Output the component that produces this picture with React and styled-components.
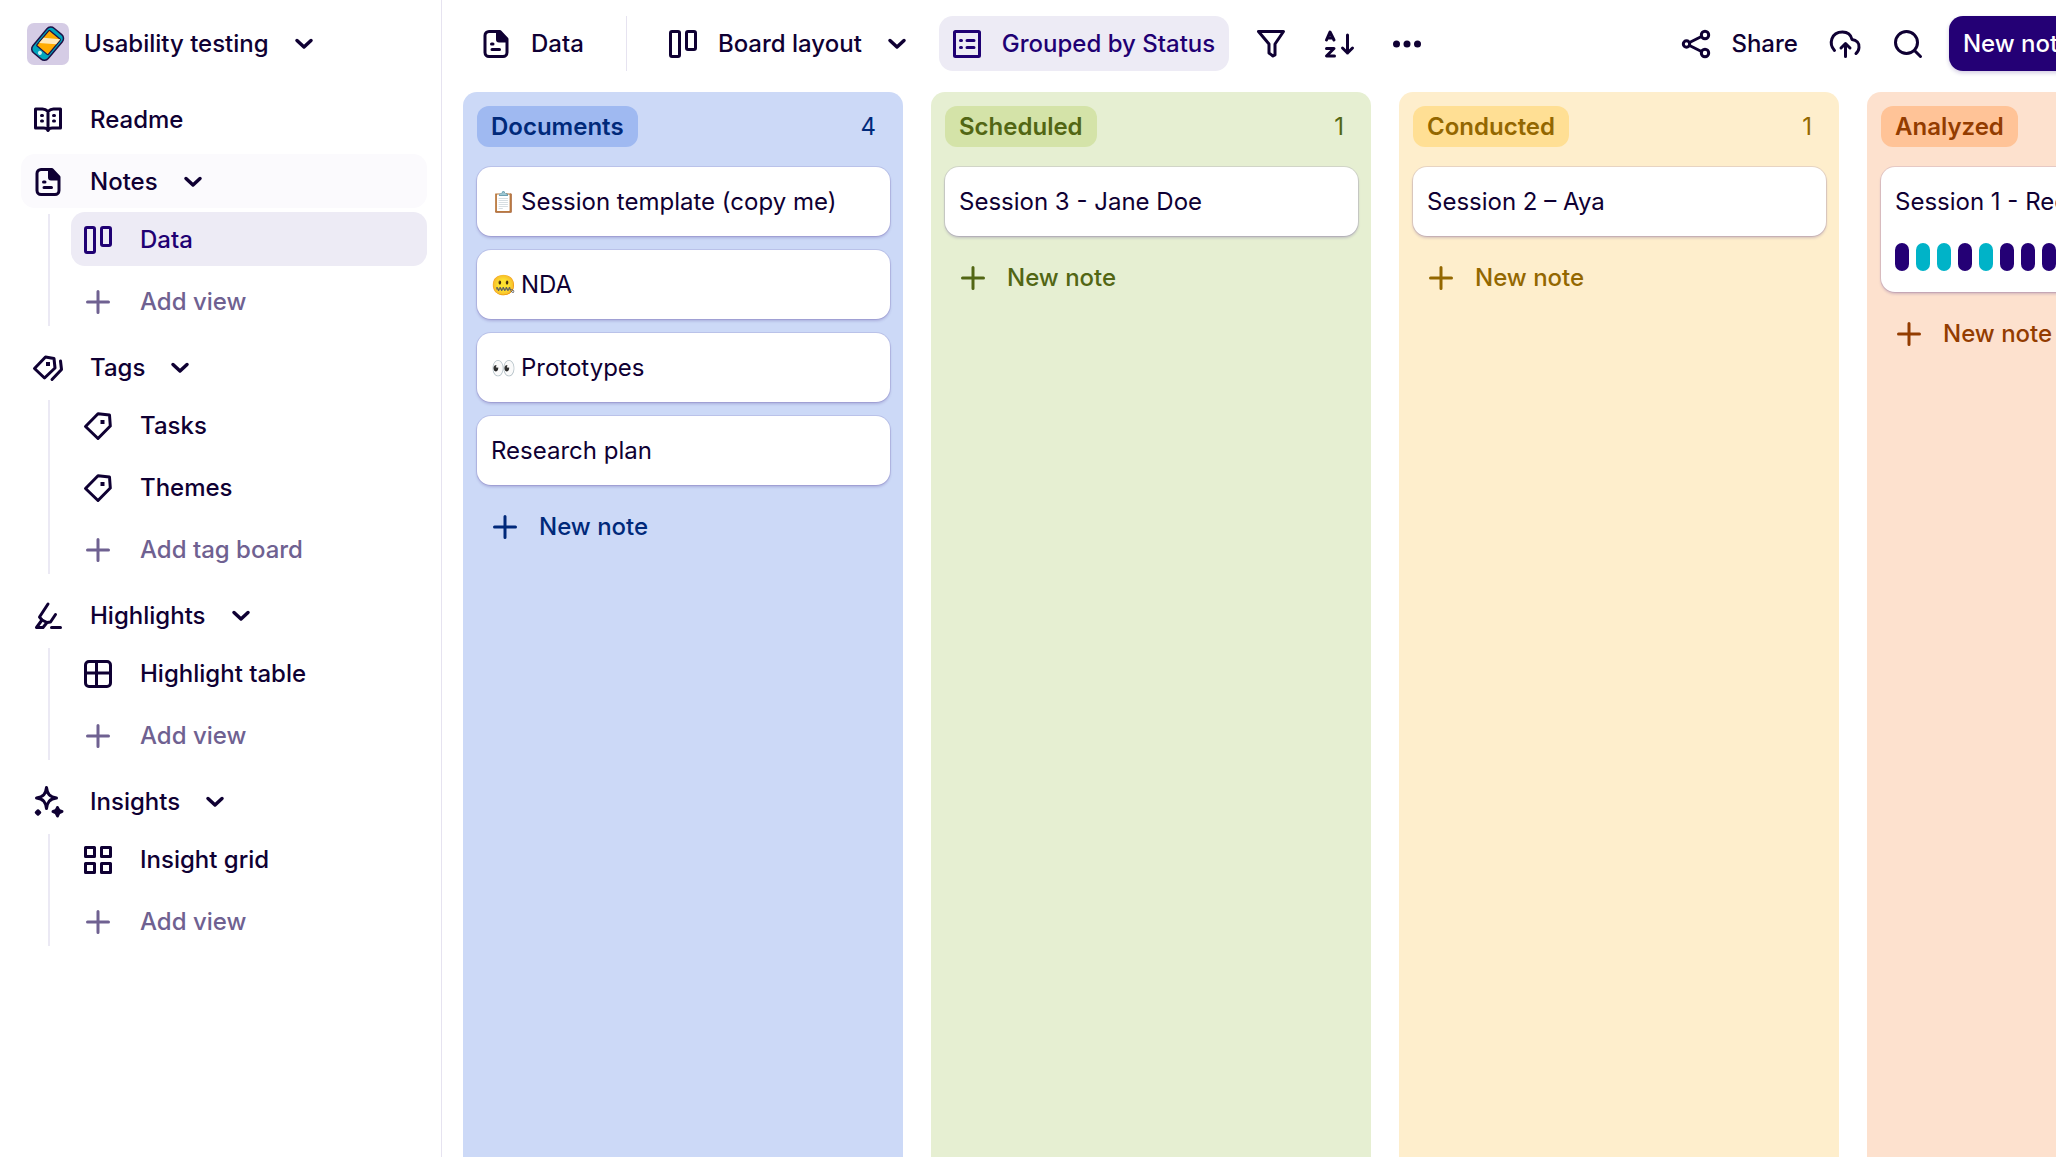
import { useState } from 'react'
import styled, { createGlobalStyle } from 'styled-components'

// Every icon is drawn on a 28 x 28 grid
const icons = {
  book: (
    <g>
      <path d="M14 5.5C12.5 4 11 3 8.5 3H1.5V22H9.500C12 22 13.300 22.500 14 24.500C14.700 22.500 16 22 18.500 22H26.500V3H19.500C17 3 15.500 4 14 5.500V24.500" />
      <path d="M7.500 9.500H8.500M7.500 15H8.500M19.500 9.500H20.500M19.500 15H20.500" />
    </g>
  ),
  note: (
    <g>
      <path d="M17 1.500H7A4 4 0 0 0 3 5.500V22.500A4 4 0 0 0 7 26.500H21A4 4 0 0 0 25 22.500V9L18 1.500Z" />
      <path d="M14 1H18.500L26 8.500V12.500H17A3 3 0 0 1 14 9.500Z" fill="currentColor" stroke="none" />
      <path d="M9.500 14H11M10 19.500H17.500" />
    </g>
  ),
  board: (
    <g>
      <rect x="1.500" y="1.500" width="9" height="25" rx="1.500" />
      <rect x="17.500" y="1.500" width="9" height="18" rx="1.500" />
    </g>
  ),
  plus: <path d="M14 3.500V24.500M3.500 14H24.500" />,
  tags: (
    <g>
      <path d="M0.500 14.500L11.500 3L20 4.500L21 14L10.500 24Z" />
      <path d="M26.500 7L27.500 15.500L18 25.500" />
      <rect x="12" y="8" width="4" height="4" fill="currentColor" stroke="none" />
    </g>
  ),
  tag: (
    <g>
      <path d="M1.500 14.500L14 1.800L25.500 3L26.300 14L14 26.500Z" />
      <rect x="16.500" y="8" width="4" height="4" fill="currentColor" stroke="none" />
    </g>
  ),
  highlighter: (
    <g>
      <path d="M14 2L5.500 15L8 18L13 20.500L16.500 20L21.500 12.500" />
      <path d="M8 18L2.500 25.500H9L13 20.500" />
      <path d="M17.500 25.500H26.500" />
    </g>
  ),
  table: (
    <g>
      <rect x="1.500" y="1.500" width="25" height="25" rx="3.500" />
      <path d="M12.500 1.500V26.500M1.500 13H26.500" />
    </g>
  ),
  sparkle: (
    <g>
      <path d="M12.500 -0.500C13.300 6 15.500 9 22.500 10C15.500 11 13.300 14 12.500 20.500C11.700 14 9.500 11 2.500 10C9.500 9 11.700 6 12.500 -0.500Z" />
      <path d="M23.500 19.500C24 22 25 23 28 23.500C25 24 24 25 23.500 28C23 25 22 24 19 23.500C22 23 23 22 23.500 19.500Z" fill="currentColor" />
      <path d="M4 22.500L6 24.500L4 26.500L2 24.500Z" fill="currentColor" strokeWidth="2.500" />
    </g>
  ),
  grid: (
    <g>
      <rect x="1.500" y="1.500" width="9" height="9" />
      <rect x="17.500" y="1.500" width="9" height="9" />
      <rect x="1.500" y="17.500" width="9" height="9" />
      <rect x="17.500" y="17.500" width="9" height="9" />
    </g>
  ),
  group: (
    <g>
      <rect x="1.500" y="1.500" width="25" height="25" rx="1" />
      <path d="M7.500 10.500H8.500M14 10.500H21M7.500 17.500H8.500M14 17.500H21" />
    </g>
  ),
  filter: <path d="M1.500 1.500H26.500L18 14V25L16 26L12 23V14Z" />,
  sort: (
    <g>
      <path d="M1.500 10L5 2L9 10M3 8H7.500" />
      <path d="M1.500 18.500H9L1.500 26H9.500" />
      <path d="M22.500 5V23M17.500 18L22.500 23L27.500 18" />
    </g>
  ),
  dots: (
    <g fill="currentColor" stroke="none">
      <circle cx="3.500" cy="14" r="3.500" />
      <circle cx="14" cy="14" r="3.500" />
      <circle cx="24.500" cy="14" r="3.500" />
    </g>
  ),
  share: (
    <g>
      <circle cx="4.500" cy="14" r="3.200" />
      <circle cx="23" cy="5" r="3.700" />
      <circle cx="23" cy="23" r="3.700" />
      <path d="M7.500 12.500L19.500 6.500M7.500 15.500L19.500 21.500" />
    </g>
  ),
  upload: (
    <g>
      <path d="M3.500 20.500C-2.500 14 0 2 11.500 2C16.500 2 20 5 21 9.500C25.500 10 28.500 13 28 17.500C27.800 20 27 22 25 23.500" />
      <path d="M14.500 26.500V13.500M10 18L14.500 13.500L19 18" />
    </g>
  ),
  search: (
    <g>
      <circle cx="12.500" cy="12.500" r="11" />
      <path d="M20.500 20.500L26.500 26.500" />
    </g>
  ),
  chevron: <path d="M7 10.500L14 17L21 10.500" strokeWidth="3.500" />,
}

function Icon({ name }) {
  return (
    <IconSvg viewBox="0 0 28 28" aria-hidden="true">{ icons[name] }</IconSvg>
  )
}

const sections = [
  {
    title: 'Notes',
    icon: 'note',
    items: [{ id: 'data', label: 'Data', icon: 'board' }],
    add: 'Add view',
  },
  {
    title: 'Tags',
    icon: 'tags',
    items: [
      { id: 'tasks', label: 'Tasks', icon: 'tag' },
      { id: 'themes', label: 'Themes', icon: 'tag' },
    ],
    add: 'Add tag board',
  },
  {
    title: 'Highlights',
    icon: 'highlighter',
    items: [{ id: 'table', label: 'Highlight table', icon: 'table' }],
    add: 'Add view',
  },
  {
    title: 'Insights',
    icon: 'sparkle',
    items: [{ id: 'grid', label: 'Insight grid', icon: 'grid' }],
    add: 'Add view',
  },
]

const columns = [
  {
    title: 'Documents',
    background: '#ccd9f7',
    label: '#9fb9f1',
    color: '#00297a',
    cards: [
      { emoji: '📋', title: 'Session template (copy me)' },
      { emoji: '🤐', title: 'NDA' },
      { emoji: '👀', title: 'Prototypes' },
      { title: 'Research plan' },
    ],
  },
  {
    title: 'Scheduled',
    background: '#e6efd2',
    label: '#d4e3a8',
    color: '#526614',
    cards: [{ title: 'Session 3 - Jane Doe' }],
  },
  {
    title: 'Conducted',
    background: '#feeecc',
    label: '#ffdf94',
    color: '#936700',
    cards: [{ title: 'Session 2 – Aya' }],
  },
  {
    title: 'Analyzed',
    background: '#fde1ce',
    label: '#ffc397',
    color: '#933c00',
    cards: [{ title: 'Session 1 - Reed', highlights: 'pttptpppptpp' }],
  },
]

function Sidebar() {
  const [active, setActive] = useState('data')

  return (
    <SidebarWrapper>
      <Project>
        <Avatar viewBox="0 0 42 42" aria-hidden="true">
          <rect width="42" height="42" rx="7" fill="#d5cce5" />
          <g transform="rotate(40 21 21)" stroke="#1f1147">
            <rect x="10.500" y="5" width="20" height="32" rx="5" fill="#00a5bd" strokeWidth="1.500" />
            <rect x="13" y="9.500" width="15" height="20" rx="1" fill="#ffab00" strokeWidth="1.200" />
            <path d="M13.600 19L27.400 9.500V16L13.600 26Z" fill="#ffe9b8" stroke="none" />
            <circle cx="20.500" cy="33" r="2" fill="#c9f3f5" stroke="none" />
          </g>
        </Avatar>
        Usability testing
        <Icon name="chevron" />
      </Project>
      <NavItem as="a" href="#readme">
        <Icon name="book" />
        Readme
      </NavItem>
      { sections.map((section) => (
        <Section key={ section.title }>
          <SectionTitle $hovered={ section.title === 'Notes' }>
            <Icon name={ section.icon } />
            { section.title }
            <Icon name="chevron" />
          </SectionTitle>
          <SectionList>
            { section.items.map((item) => (
              <li key={ item.id }>
                <NavItem
                  className={ active === item.id ? 'active' : '' }
                  onClick={ () => setActive(item.id) }
                >
                  <Icon name={ item.icon } />
                  { item.label }
                </NavItem>
              </li>
            )) }
            <li>
              <NavItem $muted>
                <Icon name="plus" />
                { section.add }
              </NavItem>
            </li>
          </SectionList>
        </Section>
      )) }
    </SidebarWrapper>
  )
}

function Toolbar() {
  return (
    <ToolbarWrapper>
      <ToolButton><Icon name="note" />Data</ToolButton>
      <Divider />
      <ToolButton><Icon name="board" />Board layout<Icon name="chevron" /></ToolButton>
      <GroupButton><Icon name="group" />Grouped by Status</GroupButton>
      <IconButton aria-label="Filter"><Icon name="filter" /></IconButton>
      <IconButton aria-label="Sort"><Icon name="sort" /></IconButton>
      <IconButton aria-label="More"><Icon name="dots" /></IconButton>
      <Actions>
        <ToolButton><Icon name="share" />Share</ToolButton>
        <IconButton $narrow aria-label="Export"><Icon name="upload" /></IconButton>
        <IconButton $narrow aria-label="Search"><Icon name="search" /></IconButton>
        <PrimaryButton>New note</PrimaryButton>
      </Actions>
    </ToolbarWrapper>
  )
}

function Column({ column }) {
  return (
    <ColumnWrapper $background={ column.background } $color={ column.color }>
      <ColumnHeader>
        <Label $background={ column.label }>{ column.title }</Label>
        <span>{ column.cards.length }</span>
      </ColumnHeader>
      { column.cards.map((card) => (
        <Card key={ card.title }>
          <CardTitle>
            { card.emoji && <Emoji>{ card.emoji }</Emoji> }
            { card.title }
          </CardTitle>
          { card.highlights && (
            <Pills>
              { card.highlights.split('').map((kind, index) => (
                <Pill key={ index } $teal={ kind === 't' } />
              )) }
            </Pills>
          )}
        </Card>
      )) }
      <NewNote><Icon name="plus" />New note</NewNote>
    </ColumnWrapper>
  )
}

function App() {
  return (
    <>
      <GlobalStyle />
      <Page>
        <Sidebar />
        <Main>
          <Toolbar />
          <Board>
            { columns.map((column) => (
              <Column key={ column.title } column={ column } />
            )) }
          </Board>
        </Main>
      </Page>
    </>
  )
}

// Styled Components
const GlobalStyle = createGlobalStyle`
  * {
    box-sizing: border-box;
  }

  body {
    margin: 0;
    background: white;
    color: #0f0033;
    font-family: Inter, 'Liberation Sans', sans-serif;
    font-size: 24px;
    line-height: 32px;
  }

  button {
    border: none;
    background: none;
    color: inherit;
    font: inherit;
    cursor: pointer;
  }
`

const IconSvg = styled.svg`
  width: 28px;
  height: 28px;
  flex: none;
  overflow: visible;
  fill: none;
  stroke: currentColor;
  stroke-width: 3;
  stroke-linecap: round;
  stroke-linejoin: round;
`

const Page = styled.div`
  display: flex;
  min-height: 100vh;
  overflow: hidden;
`

const SidebarWrapper = styled.nav`
  flex: none;
  width: 442px;
  padding: 16px 14px 16px 21px;
  border-right: 1px solid #e6e3f0;
`

const Project = styled.button`
  display: flex;
  align-items: center;
  gap: 15px;
  height: 54px;
  margin-bottom: 22px;
  padding: 1px 6px 0;
  font-weight: 500;

  svg:last-child{
    margin-left: 6px;
  }
`

const Avatar = styled.svg`
  width: 42px;
  height: 42px;
`

const NavItem = styled.button`
  display: flex;
  align-items: center;
  gap: 28px;
  width: 100%;
  height: 54px;
  padding: 2px 13px 0;
  border-radius: 14px;
  color: ${ (props) => props.$muted ? '#6f6191' : '#0f0033' };
  font-weight: 500;
  text-decoration: none;

  &.active{
    background: #edebf5;
    color: #1f0073;
  }
`

const Section = styled.section`
  margin-bottom: 12px;

  a + &{
    margin-top: 8px;
  }
`

const SectionTitle = styled(NavItem)`
  background: ${ (props) => props.$hovered ? '#fbfafd' : 'none' };

  svg:last-child{
    margin-left: -7px;
  }
`

const SectionList = styled.ul`
  display: grid;
  gap: 8px;
  margin: 4px 0 0 27px;
  padding: 0 0 0 23px;
  background: linear-gradient(#ebe9f4, #ebe9f4) left center / 2px calc(100% - 4px) no-repeat;
  list-style: none;
`

const Main = styled.main`
  display: flex;
  flex: 1;
  flex-direction: column;
  min-width: 0;
`

const ToolbarWrapper = styled.header`
  display: flex;
  align-items: center;
  height: 92px;
  margin-right: -30px;
  padding: 0 0 5px 26px;
`

const ToolButton = styled.button`
  display: flex;
  flex: none;
  align-items: center;
  gap: 21px;
  height: 55px;
  padding: 0 14px;
  border-radius: 14px;
  font-weight: 500;
  white-space: nowrap;
`

const GroupButton = styled(ToolButton)`
  margin: 0 8px 0 14px;
  background: #edebf5;
  color: #1f0073;
`

const IconButton = styled(ToolButton)`
  padding: 0 ${ (props) => props.$narrow ? '16px' : '20px' };
`

const Divider = styled.span`
  width: 1px;
  height: 55px;
  margin: 0 28px;
  background: #e6e3f0;
`

const Actions = styled.div`
  display: flex;
  align-items: center;
  gap: 3px;
  margin-left: auto;
`

const PrimaryButton = styled(ToolButton)`
  margin-left: 8px;
  background: #240075;
  box-shadow: 0 2px 4px rgba(36, 0, 117, 0.2);
  color: white;
`

const Board = styled.div`
  display: flex;
  flex: 1;
  gap: 28px;
  padding-left: 21px;
`

const ColumnWrapper = styled.section`
  display: flex;
  flex: none;
  flex-direction: column;
  gap: 14px;
  width: 440px;
  padding: 14px 13px 14px 14px;
  border-radius: 14px 14px 0 0;
  background: ${ (props) => props.$background };
  color: ${ (props) => props.$color };
`

const ColumnHeader = styled.header`
  display: flex;
  align-items: center;
  justify-content: space-between;
  height: 41px;
  margin-bottom: 6px;
  padding-right: 14px;
`

const Label = styled.span`
  padding: 5px 14px 4px;
  border-radius: 12px;
  background: ${ (props) => props.$background };
  font-weight: 600;
`

const Card = styled.article`
  padding: 19px 14px 18px;
  border-radius: 14px;
  background: white;
  box-shadow: 0 0 0 1px rgba(36, 0, 117, 0.1), 0 2px 3px rgba(36, 0, 117, 0.2);
  color: #0f0033;
`

const CardTitle = styled.div`
  display: flex;
  align-items: center;
  overflow: hidden;
  white-space: nowrap;
`

const Emoji = styled.span`
  width: 30px;
  font-size: 20px;
`

const Pills = styled.div`
  display: flex;
  gap: 7px;
  margin: 25px 0 3px;
`

const Pill = styled.span`
  width: 14px;
  height: 28px;
  border-radius: 7px;
  background: ${ (props) => props.$teal ? '#00b3c8' : '#240075' };
`

const NewNote = styled.button`
  display: flex;
  align-items: center;
  gap: 20px;
  height: 54px;
  padding: 1px 14px 0;
  font-weight: 500;
`

export default App
